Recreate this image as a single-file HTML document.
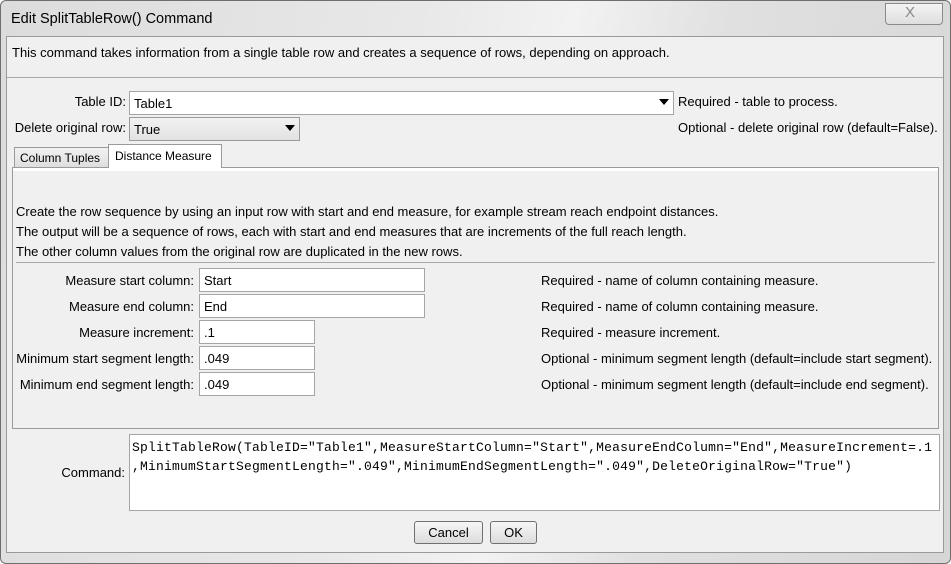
<!DOCTYPE html>
<html><head><style>
*{box-sizing:border-box;margin:0;padding:0}
body{width:951px;height:564px;overflow:hidden;background:#fff;font-family:"Liberation Sans",sans-serif;font-size:13px;color:#000;position:relative}
.frame{position:absolute;left:0;top:0;width:951px;height:564px;border:1px solid #6e6e6e;border-radius:6px;background:linear-gradient(100deg,#dcdcdc 0%,#e8e8e8 40%,#f2f2f2 55%,#e0e0e0 70%,#d6d6d6 100%)}
.body{position:absolute;left:6px;top:36px;width:938px;height:517px;background:#f0f0f0;border:1px solid #9a9a9a}
.a{position:absolute;white-space:nowrap}
.r{text-align:right}
.tf{position:absolute;background:#fff;border:1px solid #a5a5a5;padding:4px 0 0 4px;height:24px}
.btn{position:absolute;border:1px solid #707070;border-radius:3px;background:linear-gradient(#f6f6f6,#dcdcdc);text-align:center;line-height:21px;height:23px}
.arr{position:absolute;width:0;height:0;border-left:5px solid transparent;border-right:5px solid transparent;border-top:6px solid #000}
</style></head><body>
<div class="frame"></div>
<div class="a" style="left:11px;top:11px;font-size:14.5px;color:#000">Edit SplitTableRow() Command</div>
<div style="position:absolute;left:885px;top:3px;width:58px;height:22px;border:1px solid #8a8a8a;border-radius:0 0 4px 4px;background:linear-gradient(#f4f4f4,#dedede)"></div>
<div class="a" style="left:905px;top:4px;font-size:15px;color:#888">X</div>
<div class="body"></div>
<div class="a" style="left:12px;top:45px">This command takes information from a single table row and creates a sequence of rows, depending on approach.</div>
<div style="position:absolute;left:7px;top:77px;width:936px;height:1px;background:#a8a8a8"></div>

<div class="a r" style="left:0;width:126px;top:94px">Table ID:</div>
<div class="tf" style="left:129px;top:91px;width:545px">Table1</div>
<div class="arr" style="left:659px;top:99px"></div>
<div class="a" style="left:678px;top:94px">Required - table to process.</div>
<div class="a r" style="left:0;width:126px;top:120px">Delete original row:</div>
<div class="tf" style="left:129px;top:117px;width:171px;background:linear-gradient(#f2f2f2,#e2e2e2);border-color:#9a9a9a">True</div>
<div class="arr" style="left:285px;top:125px"></div>
<div class="a" style="left:678px;top:120px">Optional - delete original row (default=False).</div>

<div style="position:absolute;left:14px;top:147px;width:95px;height:21px;border:1px solid #9a9a9a;background:linear-gradient(#f2f2f2,#dedede)"></div>
<div class="a" style="left:20px;top:151px;font-size:12px">Column Tuples</div>
<div style="position:absolute;left:108px;top:144px;width:114px;height:25px;border:1px solid #9a9a9a;border-bottom:none;background:#fff"></div>
<div class="a" style="left:115px;top:149px;font-size:12px">Distance Measure</div>
<div style="position:absolute;left:12px;top:168px;width:927px;height:261px;border:1px solid #9a9a9a;border-top:none;background:#f0f0f0"></div>
<div style="position:absolute;left:12px;top:167px;width:96px;height:1px;background:#9a9a9a"></div>
<div style="position:absolute;left:222px;top:167px;width:717px;height:1px;background:#9a9a9a"></div>
<div style="position:absolute;left:13px;top:168px;width:925px;height:3px;background:#fff"></div>

<div class="a" style="left:16px;top:204px">Create the row sequence by using an input row with start and end measure, for example stream reach endpoint distances.</div>
<div class="a" style="left:16px;top:224px">The output will be a sequence of rows, each with start and end measures that are increments of the full reach length.</div>
<div class="a" style="left:16px;top:244px">The other column values from the original row are duplicated in the new rows.</div>
<div style="position:absolute;left:16px;top:262px;width:919px;height:1px;background:#a8a8a8"></div>

<div class="a r" style="left:0;width:194px;top:273px">Measure start column:</div>
<div class="tf" style="left:199px;top:268px;width:226px">Start</div>
<div class="a" style="left:541px;top:273px">Required - name of column containing measure.</div>
<div class="a r" style="left:0;width:194px;top:299px">Measure end column:</div>
<div class="tf" style="left:199px;top:294px;width:226px">End</div>
<div class="a" style="left:541px;top:299px">Required - name of column containing measure.</div>
<div class="a r" style="left:0;width:194px;top:325px">Measure increment:</div>
<div class="tf" style="left:199px;top:320px;width:116px">.1</div>
<div class="a" style="left:541px;top:325px">Required - measure increment.</div>
<div class="a r" style="left:0;width:194px;top:351px">Minimum start segment length:</div>
<div class="tf" style="left:199px;top:346px;width:116px">.049</div>
<div class="a" style="left:541px;top:351px">Optional - minimum segment length (default=include start segment).</div>
<div class="a r" style="left:0;width:194px;top:377px">Minimum end segment length:</div>
<div class="tf" style="left:199px;top:372px;width:116px">.049</div>
<div class="a" style="left:541px;top:377px">Optional - minimum segment length (default=include end segment).</div>

<div class="a r" style="left:0;width:125px;top:465px">Command:</div>
<div style="position:absolute;left:129px;top:434px;width:811px;height:77px;background:#fff;border:1px solid #a5a5a5"></div>
<div class="a" style="left:132px;top:438px;font-family:'Liberation Mono',monospace;font-size:13px;letter-spacing:0.2px;line-height:19px">SplitTableRow(TableID="Table1",MeasureStartColumn="Start",MeasureEndColumn="End",MeasureIncrement=.1<br>,MinimumStartSegmentLength=".049",MinimumEndSegmentLength=".049",DeleteOriginalRow="True")</div>

<div class="btn" style="left:414px;top:521px;width:69px">Cancel</div>
<div class="btn" style="left:490px;top:521px;width:47px">OK</div>
</body></html>
